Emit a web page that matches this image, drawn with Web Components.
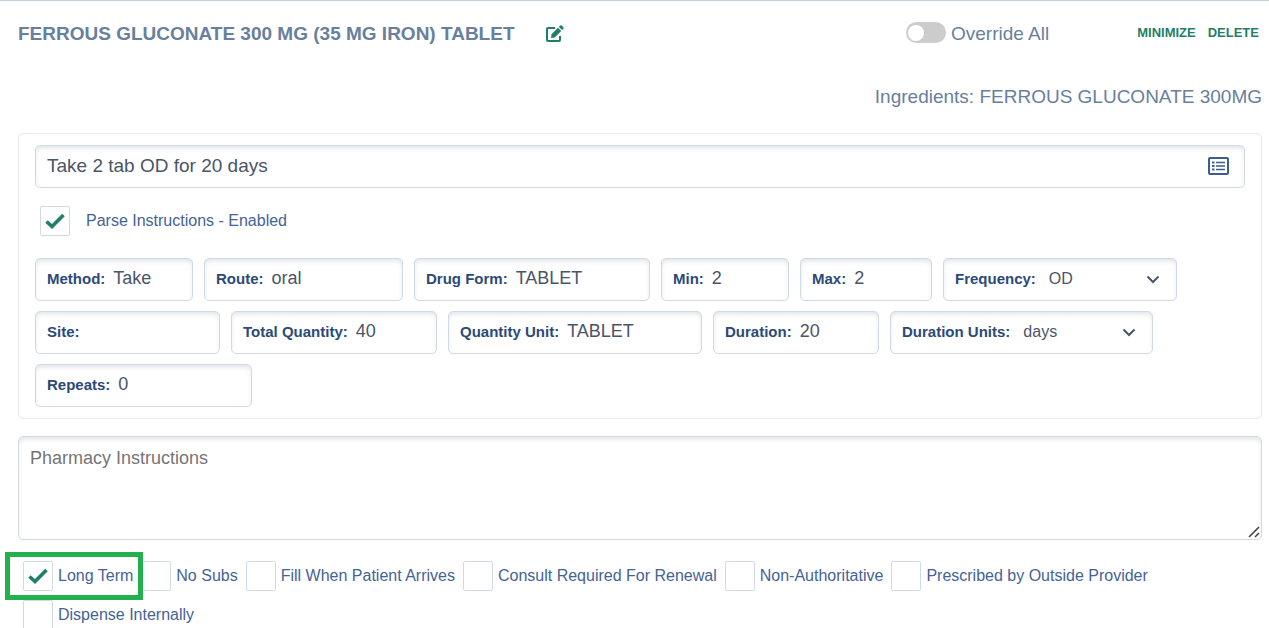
<!DOCTYPE html>
<html lang="en">
<head>
<meta charset="utf-8">
<title>Prescription</title>
<style>
    :root{
        --heading: #68809d;
        --link: #1f7f68;
        --label: #2b4a78;
        --check-label: #446396;
        --main-text: #4a5568;
        --border-color: #d0dae6;
        --field-shadow: inset 0 3px 5px -1px rgba(60, 75, 100, .16);
        --text-lg: 19px;
        --text-md: 18px;
        --text-sm: 16px;
        --text-xs: 15px;
    }
    html{
        overflow-x: hidden;
        scrollbar-width: none;
    }
    body{
        margin: 0;
        background: white;
        font-family: "Liberation Sans", Arial, sans-serif;
    }
</style>
</head>
<body>
<rx-card></rx-card>

<script>
class RxHeader extends HTMLElement{
    constructor(){
        super();
        this.attachShadow({mode : "open"});
        this.shadowRoot.innerHTML = `
            <style>
                *{
                    box-sizing: border-box;
                }
                :host{
                    display: block;
                    color: var(--heading);
                    font-size: var(--text-lg);
                    line-height: 24px;
                }
                header{
                    display: flex;
                    align-items: center;
                    padding: 21px 10px 0 18px;
                }
                h2{
                    margin: 0;
                    font-size: var(--text-lg);
                    font-weight: bold;
                }
                button{
                    border: 0;
                    padding: 0;
                    background: none;
                    color: var(--link);
                    font: bold 13px/20px "Liberation Sans", Arial, sans-serif;
                    cursor: pointer;
                }
                .edit{
                    display: flex;
                    margin-left: 30px;
                }
                .actions{
                    display: flex;
                    gap: 12px;
                    margin-left: 88px;
                    padding-bottom: 2px;
                }
                .toggle{
                    display: flex;
                    align-items: flex-start;
                    gap: 5px;
                    margin-left: auto;
                }
                .toggle input{
                    appearance: none;
                    display: flex;
                    align-items: center;
                    width: 40px;
                    height: 21px;
                    margin: 0;
                    padding: 2px;
                    border-radius: 11px;
                    background: #ccc;
                }
                .toggle input::before{
                    content: "";
                    width: 16px;
                    height: 16px;
                    border-radius: 50%;
                    background: white;
                }
                .toggle input:checked{
                    justify-content: flex-end;
                    background: var(--link);
                }
                p{
                    margin: 39px 7px 0 0;
                    text-align: right;
                }
            </style>
            <header>
                <h2><slot name="title"></slot></h2>
                <button class="edit" aria-label="Edit">
                    <svg width="20" height="18" viewBox="0 0 20 18" fill="none">
                        <path d="M10 3H3q-1 0-1 1v11q0 1 1 1h11q1 0 1-1v-4" stroke="currentColor" stroke-width="2"/>
                        <path d="M6.500 9.300 13 2.800 16.200 6 9.700 12.500 6 13zM13.900 1.900 15.200.6q.8-.6 1.500 0L18.400 2.300q.6.800 0 1.500L17.100 5.100z" fill="currentColor"/>
                    </svg>
                </button>
                <label class="toggle"><input type="checkbox" role="switch">Override All</label>
                <div class="actions">
                    <button>MINIMIZE</button>
                    <button>DELETE</button>
                </div>
            </header>
            <p><slot name="ingredients"></slot></p>
        `;
    }
}
customElements.define("rx-header", RxHeader);

// text field or drop-down with its label inside the box
class RxField extends HTMLElement{
    constructor(){
        super();
        this.attachShadow({mode : "open"});
    }
    connectedCallback(){
        const label = this.getAttribute("label");
        const value = this.getAttribute("value") || "";
        const isSelect = this.hasAttribute("select");
        this.shadowRoot.innerHTML = `
            <style>
                *{
                    box-sizing: border-box;
                }
                :host{
                    display: block;
                    max-width: 100%;
                }
                .field{
                    display: flex;
                    align-items: baseline;
                    gap: 8px;
                    height: 43px;
                    padding: 7px 11px 0;
                    border: 1px solid var(--border-color);
                    border-radius: 5px;
                    background: white;
                    box-shadow: var(--field-shadow);
                }
                label{
                    color: var(--label);
                    font-size: var(--text-xs);
                    font-weight: bold;
                    white-space: nowrap;
                }
                input, select{
                    flex: 1;
                    min-width: 0;
                    height: 24px;
                    padding: 0;
                    border: 0;
                    outline: 0;
                    background: none;
                    color: var(--main-text);
                    font-family: inherit;
                    font-size: var(--text-md);
                }
                select{
                    appearance: none;
                    margin-left: 5px;
                    font-size: var(--text-sm);
                }
                svg{
                    align-self: center;
                    flex: none;
                    margin: 0 5px 7px 0;
                    color: var(--main-text);
                }
            </style>
            <div class="field">
                <label for="control">${label}:</label>
                ${isSelect
                    ? `<select id="control"><option>${value}</option></select>
                       <svg width="14" height="9" viewBox="0 0 14 9" fill="none"><path d="M1.500 1.500 7 7l5.500-5.500" stroke="currentColor" stroke-width="2"/></svg>`
                    : `<input id="control" type="text" value="${value}">`}
            </div>
        `;
    }
}
customElements.define("rx-field", RxField);

class RxCheckbox extends HTMLElement{
    constructor(){
        super();
        this.attachShadow({mode : "open"});
        this.shadowRoot.innerHTML = `
            <style>
                :host{
                    display: block;
                }
                label{
                    display: flex;
                    align-items: center;
                    gap: var(--check-gap, 5px);
                    color: var(--check-label);
                    font-size: var(--text-sm);
                    line-height: 20px;
                    white-space: nowrap;
                }
                .box{
                    display: grid;
                    flex: none;
                    width: 30px;
                    height: 30px;
                }
                .box > *{
                    grid-area: 1 / 1;
                }
                input{
                    appearance: none;
                    box-sizing: border-box;
                    width: 30px;
                    height: 30px;
                    margin: 0;
                    border: 1px solid var(--border-color);
                    border-radius: 2px;
                    background: white;
                }
                svg{
                    place-self: center;
                    visibility: hidden;
                    color: var(--link);
                    pointer-events: none;
                }
                input:checked + svg{
                    visibility: visible;
                }
            </style>
            <label>
                <span class="box">
                    <input type="checkbox">
                    <svg width="20" height="16" viewBox="0 0 20 16" fill="none"><path d="M1.500 8.500 7 13.500 18.500 2" stroke="currentColor" stroke-width="3.600"/></svg>
                </span>
                <slot></slot>
            </label>
        `;
    }
    connectedCallback(){
        this.shadowRoot.querySelector("input").checked = this.hasAttribute("checked");
    }
}
customElements.define("rx-checkbox", RxCheckbox);

class RxInstructions extends HTMLElement{
    constructor(){
        super();
        this.attachShadow({mode : "open"});
        this.shadowRoot.innerHTML = `
            <style>
                *{
                    box-sizing: border-box;
                }
                :host{
                    display: block;
                    padding: 11px 16px;
                    border: 1px solid #e6eaf0;
                    border-radius: 5px;
                }
                .sig{
                    display: flex;
                    align-items: center;
                    height: 43px;
                    padding: 0 15px 2px 11px;
                    border: 1px solid var(--border-color);
                    border-radius: 5px;
                    box-shadow: var(--field-shadow);
                }
                .sig input{
                    flex: 1;
                    min-width: 0;
                    padding: 0;
                    border: 0;
                    outline: 0;
                    background: none;
                    color: var(--main-text);
                    font-family: inherit;
                    font-size: var(--text-lg);
                }
                .sig button{
                    display: flex;
                    padding: 0;
                    border: 0;
                    background: none;
                    color: #3c5c92;
                }
                rx-checkbox{
                    --check-gap: 16px;
                    margin: 18px 5px 22px;
                }
                .fields{
                    display: flex;
                    flex-wrap: wrap;
                    gap: 10px 11px;
                }
            </style>
            <div class="sig">
                <input type="text" aria-label="Instructions" value="Take 2 tab OD for 20 days">
                <button aria-label="Templates">
                    <svg width="21" height="18" viewBox="0 0 21 18" fill="none" stroke="currentColor">
                        <rect x="1" y="1" width="19" height="16" rx="1" stroke-width="2"/>
                        <path d="M8 5.500h9M8 9h9M8 12.500h9" stroke-width="1.600"/>
                        <path d="M4 5.500h2.500M4 9h2.500M4 12.500h2.500" stroke-width="2.200"/>
                    </svg>
                </button>
            </div>
            <rx-checkbox checked>Parse Instructions - Enabled</rx-checkbox>
            <div class="fields"><slot></slot></div>
        `;
    }
}
customElements.define("rx-instructions", RxInstructions);

class RxCard extends HTMLElement{
    constructor(){
        super();
        this.attachShadow({mode : "open"});
        this.shadowRoot.innerHTML = `
            <style>
                *{
                    box-sizing: border-box;
                }
                :host{
                    display: block;
                    border-top: 1px solid #c3d0e0;
                }
                rx-instructions{
                    margin: 24px 7px 0 18px;
                }
                .notes{
                    display: flex;
                    position: relative;
                    margin: 17px 7px 0 18px;
                }
                textarea{
                    flex: 1;
                    height: 104px;
                    padding: 10px 11px;
                    border: 1px solid var(--border-color);
                    border-radius: 5px;
                    outline: 0;
                    box-shadow: var(--field-shadow);
                    color: var(--main-text);
                    font-family: inherit;
                    font-size: var(--text-md);
                    line-height: 22px;
                }
                textarea::placeholder{
                    color: #757575;
                }
                textarea::-webkit-resizer{
                    background: none;
                }
                .grip{
                    position: absolute;
                    right: 2px;
                    bottom: 2px;
                    color: #444;
                    pointer-events: none;
                }
                .options{
                    display: flex;
                    flex-wrap: wrap;
                    gap: 9px 8px;
                    padding: 21px 60px 0 23px;
                }
                .marked{
                    position: relative;
                }
                /* highlight frame round the option */
                .marked::after{
                    content: "";
                    position: absolute;
                    inset: -9px -10px -9px -18px;
                    border: 5px solid #22b14c;
                    pointer-events: none;
                    z-index: 1;
                }
                .method{ width: 158px; }
                .route{ width: 199px; }
                .form{ width: 236px; }
                .min{ width: 128px; }
                .max{ width: 132px; }
                .frequency{ width: 234px; }
                .site{ width: 185px; }
                .total{ width: 206px; }
                .unit{ width: 254px; }
                .duration{ width: 166px; }
                .duration-units{ width: 263px; }
                .repeats{ width: 217px; }
            </style>
            <rx-header>
                <span slot="title">FERROUS GLUCONATE 300 MG (35 MG IRON) TABLET</span>
                <span slot="ingredients">Ingredients: FERROUS GLUCONATE 300MG</span>
            </rx-header>
            <rx-instructions>
                <rx-field class="method" label="Method" value="Take"></rx-field>
                <rx-field class="route" label="Route" value="oral"></rx-field>
                <rx-field class="form" label="Drug Form" value="TABLET"></rx-field>
                <rx-field class="min" label="Min" value="2"></rx-field>
                <rx-field class="max" label="Max" value="2"></rx-field>
                <rx-field class="frequency" label="Frequency" value="OD" select></rx-field>
                <rx-field class="site" label="Site"></rx-field>
                <rx-field class="total" label="Total Quantity" value="40"></rx-field>
                <rx-field class="unit" label="Quantity Unit" value="TABLET"></rx-field>
                <rx-field class="duration" label="Duration" value="20"></rx-field>
                <rx-field class="duration-units" label="Duration Units" value="days" select></rx-field>
                <rx-field class="repeats" label="Repeats" value="0"></rx-field>
            </rx-instructions>
            <div class="notes">
                <textarea aria-label="Pharmacy Instructions" placeholder="Pharmacy Instructions"></textarea>
                <svg class="grip" width="12" height="12" viewBox="0 0 12 12" fill="none"><path d="M1 11 11 1M7 11l4-4" stroke="currentColor" stroke-width="1.600"/></svg>
            </div>
            <div class="options">
                <rx-checkbox class="marked" checked>Long Term</rx-checkbox>
                <rx-checkbox>No Subs</rx-checkbox>
                <rx-checkbox>Fill When Patient Arrives</rx-checkbox>
                <rx-checkbox>Consult Required For Renewal</rx-checkbox>
                <rx-checkbox>Non-Authoritative</rx-checkbox>
                <rx-checkbox>Prescribed by Outside Provider</rx-checkbox>
                <rx-checkbox>Dispense Internally</rx-checkbox>
            </div>
        `;
    }
}
customElements.define("rx-card", RxCard);
</script>
</body>
</html>
